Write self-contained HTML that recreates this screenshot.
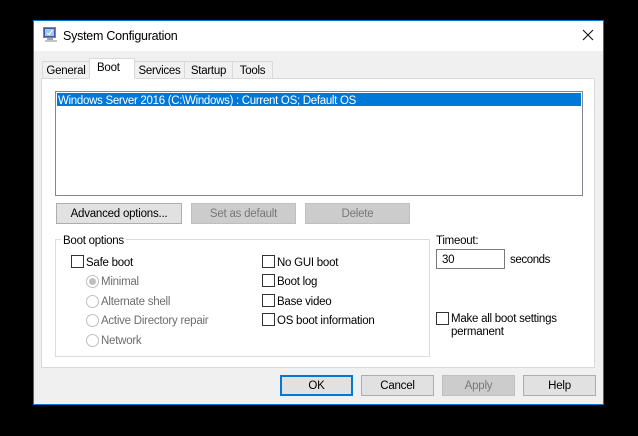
<!DOCTYPE html>
<html><head><meta charset="utf-8"><style>
html,body{margin:0;padding:0;background:#000;width:638px;height:436px;overflow:hidden}
*{box-sizing:border-box}
body{font:12px/14px "Liberation Sans",sans-serif;color:#000;position:relative}
.a{position:absolute}
.t{position:absolute;white-space:nowrap;height:14px;line-height:14px;margin-top:1px;letter-spacing:-.25px}
.g{color:#6d6d6d}
.tab{position:absolute;background:#f0f0f0;border:1px solid #d9d9d9;border-bottom:none;text-align:center;letter-spacing:-.25px}
.btn{position:absolute;background:#e1e1e1;border:1px solid #adadad;text-align:center;line-height:21px;height:21px;letter-spacing:-.22px}
.dis{background:#ccc;border-color:#bfbfbf;color:#787878}
.cb{position:absolute;width:13px;height:13px;background:#fff;border:1px solid #333}
.r{position:absolute;width:13px;height:13px;border-radius:50%;background:#fff;border:1px solid #bfbfbf}
</style></head><body>
<div class="a" style="left:33px;top:20px;width:571px;height:385px;background:#f0f0f0;border:1px solid #0078d7"></div>
<div class="a" style="left:34px;top:21px;width:569px;height:30px;background:#fff"></div>

<svg class="a" style="left:43px;top:27px" width="15" height="17" viewBox="0 0 15 17">
<rect x="0.5" y="0.5" width="12" height="10" fill="#4a55a8" stroke="#7a80b0"/>
<rect x="2" y="2" width="9" height="7" fill="#9cc9ee"/>
<path d="M4 6l2 1.500L9.500 3" stroke="#fff" stroke-width="1" fill="none"/>
<rect x="4" y="11" width="6" height="2" fill="#a5a5a5"/>
<rect x="2" y="13" width="12" height="2" fill="#c4c4c4"/>
</svg>
<div class="t" style="left:63px;top:28px;font-size:12.500px">System Configuration</div>
<svg class="a" style="left:582px;top:29px" width="12" height="12" viewBox="0 0 12 12"><path d="M1 1L11 11M11 1L1 11" stroke="#111" stroke-width="1.100" fill="none"/></svg>

<div class="a" style="left:41px;top:78px;width:554px;height:290px;background:#fff;border:1px solid #d9d9d9"></div>
<div class="tab" style="left:42px;top:61px;width:48px;height:17px;line-height:19px;font-size:11.500px">General</div>
<div class="tab" style="left:134px;top:61px;width:51px;height:17px;line-height:19px;font-size:11.500px">Services</div>
<div class="tab" style="left:184px;top:61px;width:49px;height:17px;line-height:19px;font-size:11.500px">Startup</div>
<div class="tab" style="left:232px;top:61px;width:41px;height:17px;line-height:19px;font-size:11.500px">Tools</div>
<div class="tab" style="left:89px;top:58px;width:46px;height:21px;background:#fff;text-align:left;padding-left:7px;line-height:19px;font-size:11.500px;border-bottom:1px solid #fff">Boot</div>

<div class="a" style="left:55px;top:91px;width:528px;height:105px;background:#fff;border:1px solid #828790"></div>
<div class="a" style="left:57px;top:93px;width:524px;height:13px;background:#0078d7"></div>
<div class="t" style="left:58px;top:93px;color:#fff;font-size:11.500px;letter-spacing:-.3px">Windows Server 2016 (C:\Windows) : Current OS; Default OS</div>

<div class="btn" style="left:56px;top:203px;width:126px;font-size:11.500px">Advanced options...</div>
<div class="btn dis" style="left:191px;top:203px;width:105px;font-size:11.500px">Set as default</div>
<div class="btn dis" style="left:305px;top:203px;width:105px;font-size:11.500px">Delete</div>

<div class="a" style="left:55px;top:239px;width:375px;height:118px;border:1px solid #dcdcdc"></div>
<div class="t" style="left:61px;top:233px;background:#fff;padding:0 2px;font-size:11.500px">Boot options</div>

<div class="cb" style="left:71px;top:255px"></div><div class="t" style="left:86px;top:255px;font-size:11.500px">Safe boot</div>
<div class="r" style="left:86px;top:275px"></div><div class="a" style="left:89px;top:278px;width:7px;height:7px;border-radius:50%;background:#bfbfbf"></div>
<div class="t g" style="left:101px;top:274px;font-size:11.500px">Minimal</div>
<div class="r" style="left:86px;top:295px"></div><div class="t g" style="left:101px;top:294px;font-size:11.500px">Alternate shell</div>
<div class="r" style="left:86px;top:314px"></div><div class="t g" style="left:101px;top:313px;font-size:11.500px">Active Directory repair</div>
<div class="r" style="left:86px;top:334px"></div><div class="t g" style="left:101px;top:333px;font-size:11.500px">Network</div>

<div class="cb" style="left:262px;top:255px"></div><div class="t" style="left:277px;top:255px;font-size:11.500px">No GUI boot</div>
<div class="cb" style="left:262px;top:274px"></div><div class="t" style="left:277px;top:274px;font-size:11.500px">Boot log</div>
<div class="cb" style="left:262px;top:294px"></div><div class="t" style="left:277px;top:294px;font-size:11.500px">Base video</div>
<div class="cb" style="left:262px;top:313px"></div><div class="t" style="left:277px;top:313px;font-size:11.500px">OS boot information</div>

<div class="t" style="left:436px;top:233px;font-size:11.500px">Timeout:</div>
<div class="a" style="left:436px;top:249px;width:69px;height:20px;background:#fff;border:1px solid #7a7a7a"></div>
<div class="t" style="left:442px;top:252px;font-size:11.500px">30</div>
<div class="t" style="left:510px;top:252px;font-size:11.500px;letter-spacing:-.4px">seconds</div>
<div class="cb" style="left:436px;top:312px"></div>
<div class="t" style="left:451px;top:311px;font-size:11.500px">Make all boot settings</div>
<div class="t" style="left:451px;top:324px;font-size:11.500px">permanent</div>

<div class="btn" style="left:280px;top:375px;width:73px;border:2px solid #0078d7;line-height:19px;font-size:11.500px">OK</div>
<div class="btn" style="left:361px;top:375px;width:73px;font-size:11.500px">Cancel</div>
<div class="btn dis" style="left:442px;top:375px;width:73px;font-size:11.500px">Apply</div>
<div class="btn" style="left:523px;top:375px;width:73px;font-size:11.500px">Help</div>
</body></html>
